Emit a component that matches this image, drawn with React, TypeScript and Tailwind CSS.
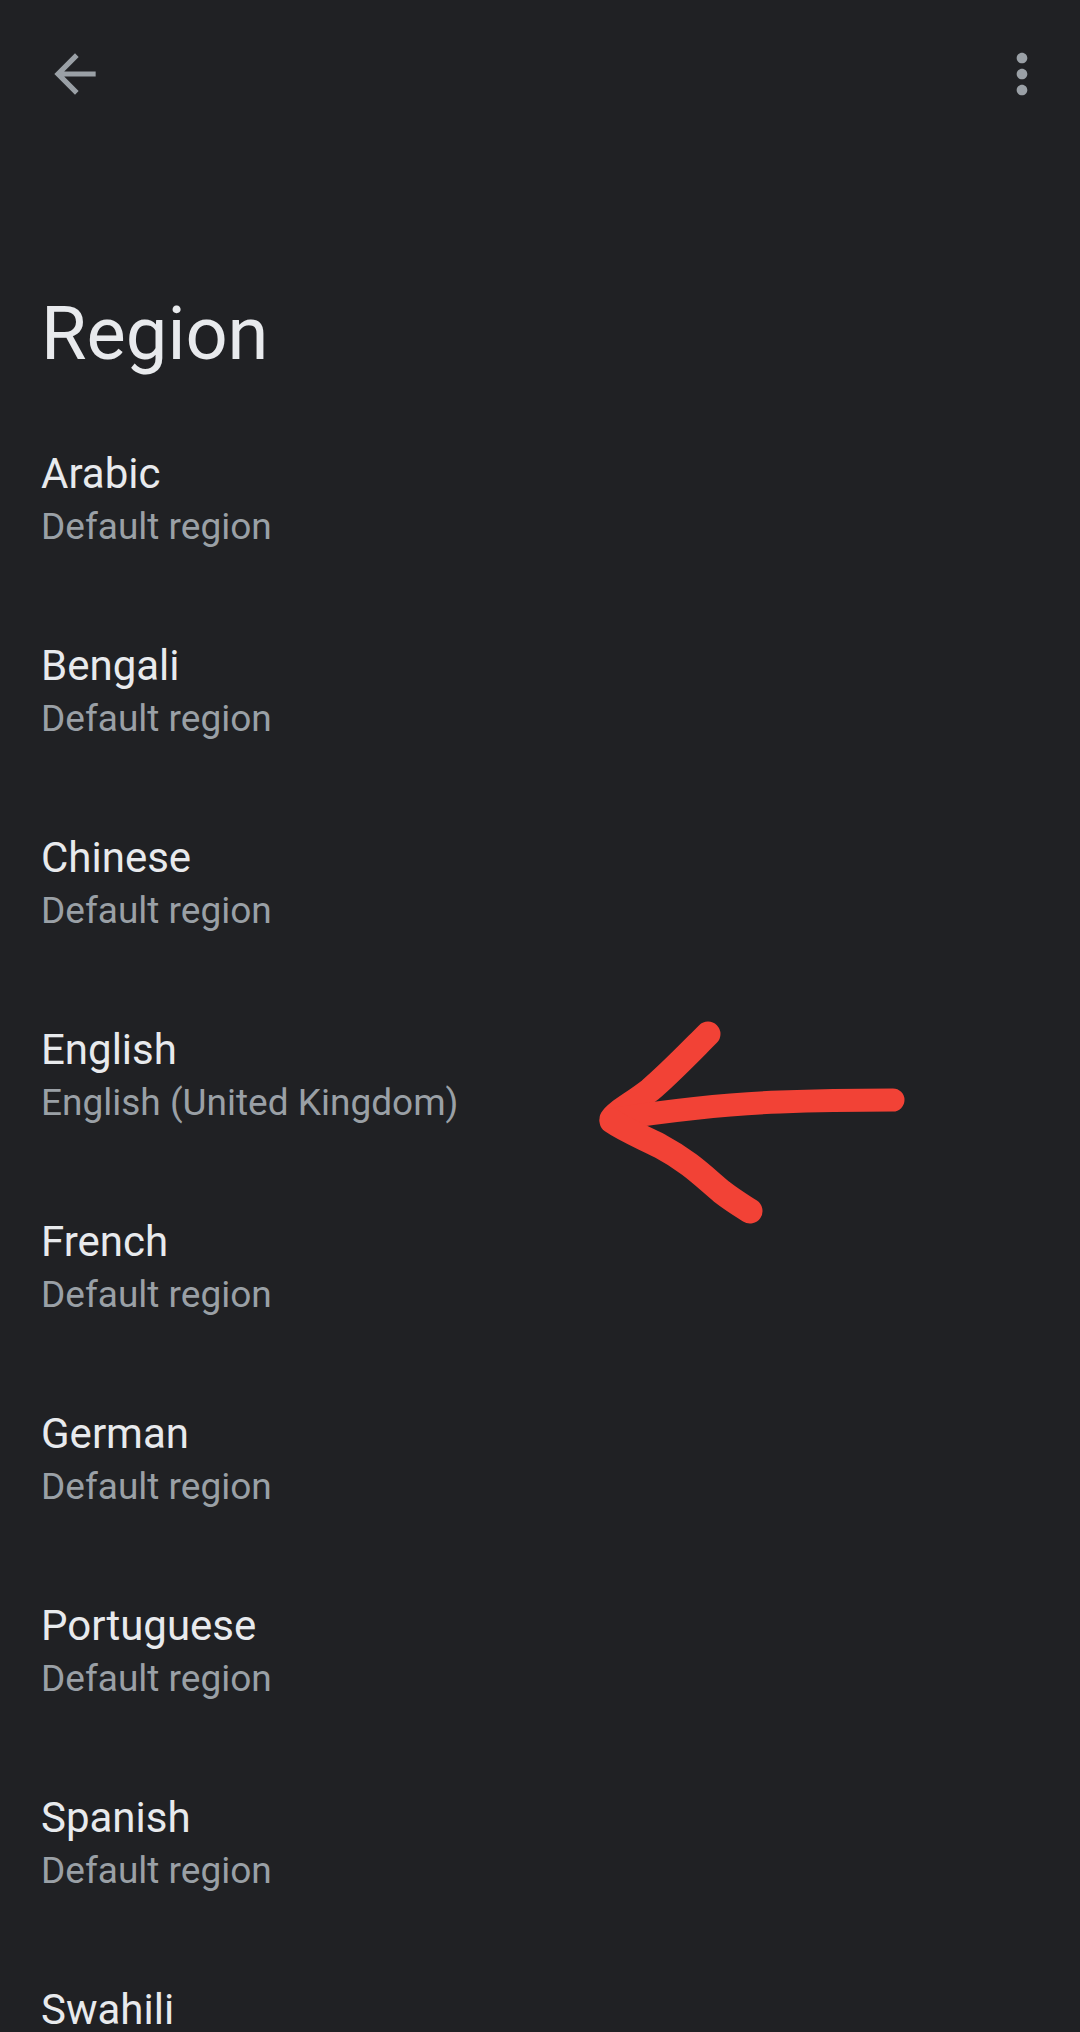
import React from 'react'

const regions = [
    { name: 'Arabic', value: 'Default region' },
    { name: 'Bengali', value: 'Default region' },
    { name: 'Chinese', value: 'Default region' },
    { name: 'English', value: 'English (United Kingdom)' },
    { name: 'French', value: 'Default region' },
    { name: 'German', value: 'Default region' },
    { name: 'Portuguese', value: 'Default region' },
    { name: 'Spanish', value: 'Default region' },
    { name: 'Swahili', value: 'Default region' },
]

const RegionRow = ({ name, value }: { name: string; value: string }) => (
    <div className="py-[43px] px-[41px]">
        <div className="text-[42px] leading-[56px] text-[#e8eaed]">{name}</div>
        <div className="text-[37px] leading-[50px] text-[#9aa0a6]">{value}</div>
    </div>
)

export default function App() {
    return (
        <div
            className="relative h-[2032px] w-[1080px] overflow-hidden bg-[#202124]"
            style={{ fontFamily: 'Roboto, "Noto Sans", sans-serif' }}
        >
            <header className="flex h-[148px] items-center justify-between pl-[44px] pr-[26px]">
                <svg width="62" height="62" viewBox="0 0 24 24" fill="#9aa0a6" aria-hidden="true">
                    <path d="M20 11H7.83l5.59-5.59L12 4l-8 8 8 8 1.41-1.41L7.83 13H20v-2z" />
                </svg>
                <svg width="64" height="64" viewBox="0 0 24 24" fill="#9aa0a6" aria-hidden="true">
                    <path d="M12 8c1.1 0 2-.9 2-2s-.9-2-2-2-2 .9-2 2 .9 2 2 2zm0 2c-1.1 0-2 .9-2 2s.9 2 2 2 2-.9 2-2-.9-2-2-2zm0 6c-1.1 0-2 .9-2 2s.9 2 2 2 2-.9 2-2-.9-2-2-2z" />
                </svg>
            </header>

            <h1 className="mt-[142px] px-[41px] text-[74px] leading-[88px] font-normal text-[#e8eaed]">
                Region
            </h1>

            <div className="mt-[25px] flex flex-col">
                {regions.map((r) => (
                    <RegionRow key={r.name} name={r.name} value={r.value} />
                ))}
            </div>

            {/* hand-drawn annotation */}
            <svg
                className="pointer-events-none absolute left-0 top-0"
                width="1080"
                height="2032"
                viewBox="0 0 1080 2032"
                fill="none"
                aria-hidden="true"
            >
                <g stroke="#f24236" strokeLinecap="round" strokeLinejoin="round">
                    <path strokeWidth="25" d="M708 1034 C 690 1052, 670 1073, 650 1090 C 632 1104, 616 1112, 612 1119" />
                    <path strokeWidth="23" d="M614 1119 C 660 1112, 720 1104, 780 1102 C 830 1100, 870 1100, 893 1100" />
                    <path strokeWidth="25" d="M612 1121 C 625 1130, 640 1136, 660 1146 C 690 1162, 705 1178, 722 1192 C 735 1202, 744 1207, 750 1211" />
                </g>
            </svg>
        </div>
    )
}
